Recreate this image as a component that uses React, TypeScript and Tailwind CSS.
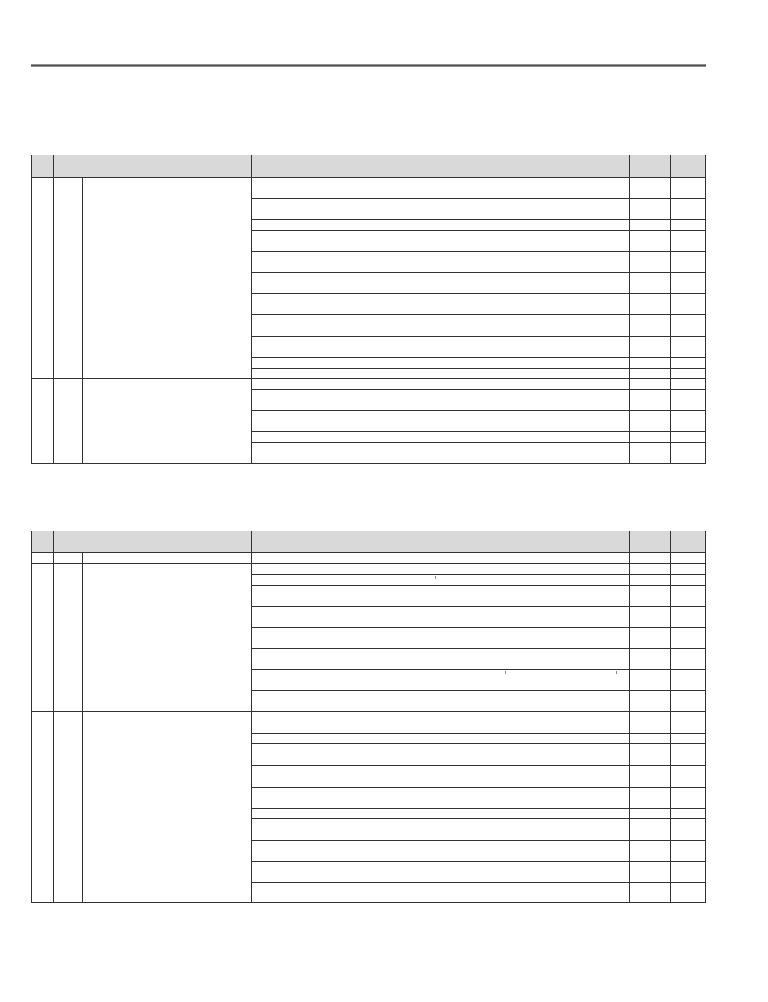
import React from "react";

type Mark = { row: number; x: number };

const LINE = "border-[#333333]";

function HeaderRow({ h }: { h: string }) {
  return (
    <div className={`flex ${h} bg-[#d9d9d9] border-b ${LINE}`}>
      <div className={`w-[22px] shrink-0 border-r ${LINE}`} />
      <div className={`w-[198px] shrink-0 border-r ${LINE}`} />
      <div className={`w-[378px] shrink-0 border-r ${LINE}`} />
      <div className={`w-[41px] shrink-0 border-r ${LINE}`} />
      <div className={`w-[35px] shrink-0 border-r ${LINE}`} />
    </div>
  );
}

function RightRow({ height, marks = [] }: { height: number; marks?: number[] }) {
  return (
    <div className={`flex border-b ${LINE}`} style={{ height }}>
      <div className={`relative w-[378px] shrink-0 border-r ${LINE}`}>
        {marks.map((x) => (
          <span
            key={x}
            className="absolute top-[1px] h-[3px] w-[1px] bg-[#8a8a8a]"
            style={{ left: x }}
          />
        ))}
      </div>
      <div className={`w-[41px] shrink-0 border-r ${LINE}`} />
      <div className={`w-[35px] shrink-0 border-r ${LINE}`} />
    </div>
  );
}

function Group({ rows, marks = [] }: { rows: number[]; marks?: Mark[] }) {
  return (
    <div className="flex">
      <div className={`w-[22px] shrink-0 border-r border-b ${LINE}`} />
      <div className={`w-[29px] shrink-0 border-r border-b ${LINE}`} />
      <div className={`w-[169px] shrink-0 border-r border-b ${LINE}`} />
      <div className="flex flex-col">
        {rows.map((h, i) => (
          <RightRow
            key={i}
            height={h}
            marks={marks.filter((m) => m.row === i).map((m) => m.x)}
          />
        ))}
      </div>
    </div>
  );
}

function Table({
  headerH,
  groups,
}: {
  headerH: string;
  groups: { rows: number[]; marks?: Mark[] }[];
}) {
  return (
    <div className={`ml-[31px] w-[675px] border-l ${LINE}`}>
      <HeaderRow h={headerH} />
      {groups.map((g, i) => (
        <Group key={i} rows={g.rows} marks={g.marks} />
      ))}
    </div>
  );
}

export default function App() {
  return (
    <div className="min-h-[1002px] w-[768px] bg-white pt-[64px] font-['Liberation_Sans',Arial,sans-serif]">
      <div className="ml-[31px] h-[3px] w-[675px] border-y border-[#8f8f8f] bg-[#4d4d4d]" />

      <div className="mt-[88px]">
        <Table
          headerH="h-[23px]"
          groups={[
            { rows: [21, 21, 11, 21, 21, 21, 21, 22, 21, 11, 10] },
            { rows: [11, 21, 21, 11, 21] },
          ]}
        />
      </div>

      <div className="mt-[67px]">
        <Table
          headerH="h-[22px]"
          groups={[
            { rows: [11] },
            {
              rows: [11, 11, 21, 21, 21, 21, 21, 21],
              marks: [
                { row: 1, x: 183 },
                { row: 6, x: 253 },
                { row: 6, x: 364 },
              ],
            },
            { rows: [22, 10, 22, 22, 21, 10, 22, 21, 21, 20] },
          ]}
        />
      </div>
    </div>
  );
}
